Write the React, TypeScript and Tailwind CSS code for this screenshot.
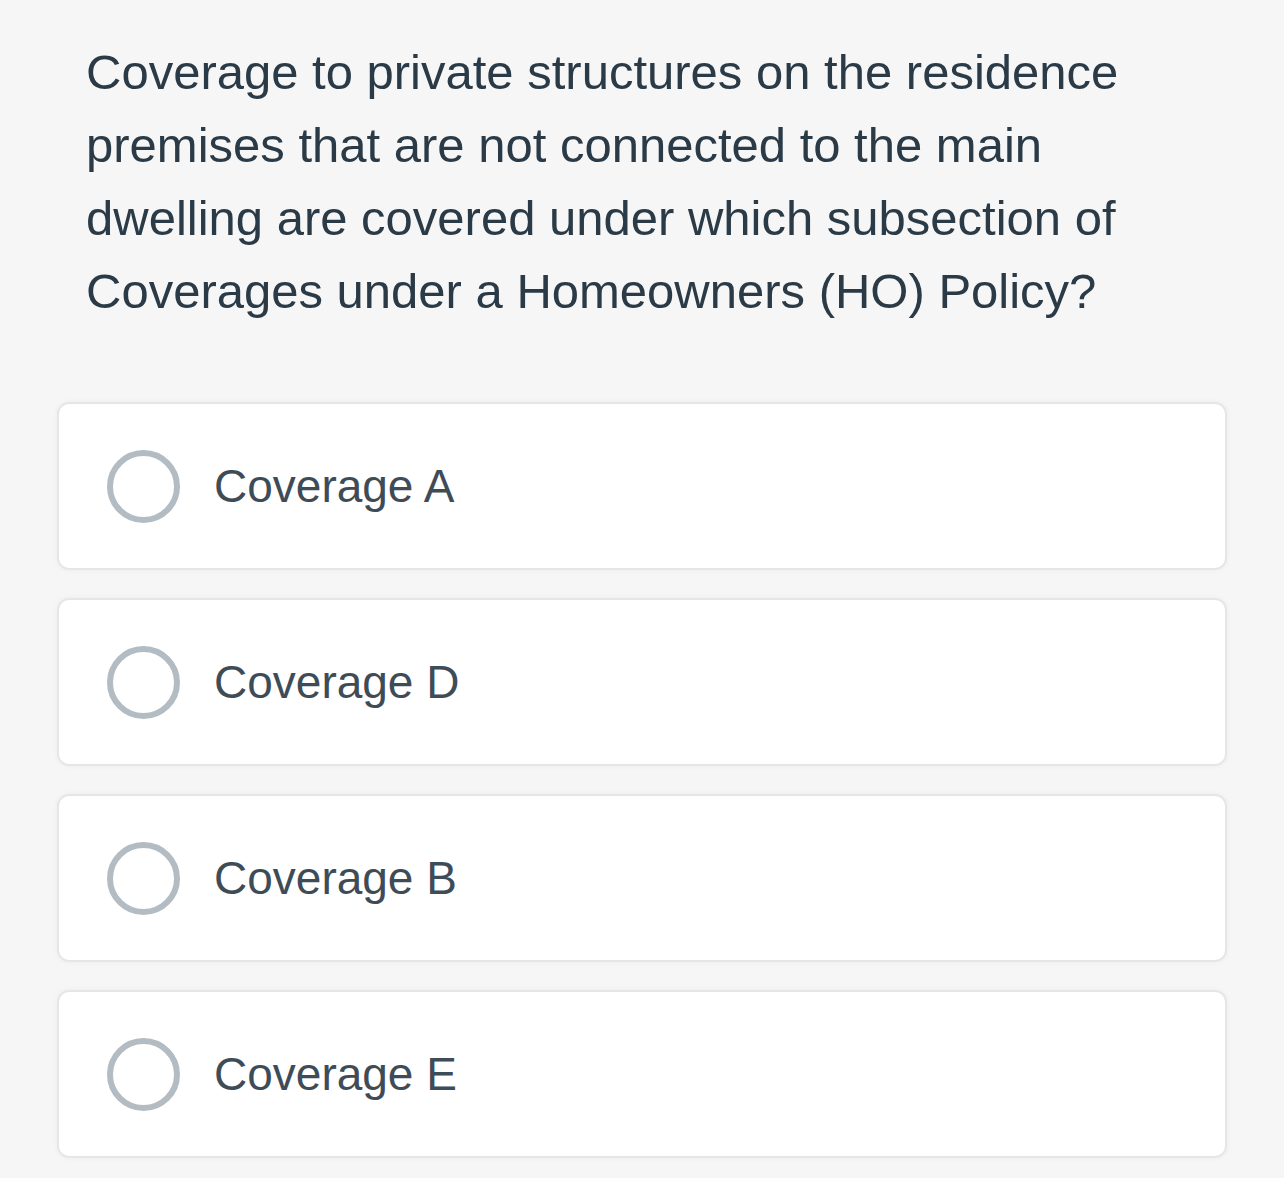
const options = ["Coverage A", "Coverage D", "Coverage B", "Coverage E"];

function RadioCircle() {
  return (
    <span className="block w-[73px] h-[73px] shrink-0 rounded-full border-[6px] border-[#b3bcc3] bg-white" />
  );
}

export default function App() {
  return (
    <div
      className="min-h-[1178px] w-full bg-[#f6f6f6] pt-[36px] pl-[57px] pr-[57px] pb-[22px]"
      style={{ fontFamily: '"Liberation Sans", Arial, sans-serif' }}
    >
      <h1 className="pl-[29px] max-w-[1140px] text-[49px] leading-[73px] font-normal text-[#2a3a46]">
        Coverage to private structures on the residence premises that are not connected to the main
        dwelling are covered under which subsection of Coverages under a Homeowners (HO) Policy?
      </h1>

      <div className="mt-[74px] flex flex-col gap-[28px]">
        {options.map((label) => (
          <label
            key={label}
            className="flex h-[168px] items-center gap-[34px] rounded-[12px] border-2 border-[#e6e6e6] bg-white pl-[48px] shadow-[0_0_6px_rgba(0,0,0,0.04)]"
          >
            <RadioCircle />
            <span className="text-[46px] text-[#3e4c58]">{label}</span>
          </label>
        ))}
      </div>
    </div>
  );
}
